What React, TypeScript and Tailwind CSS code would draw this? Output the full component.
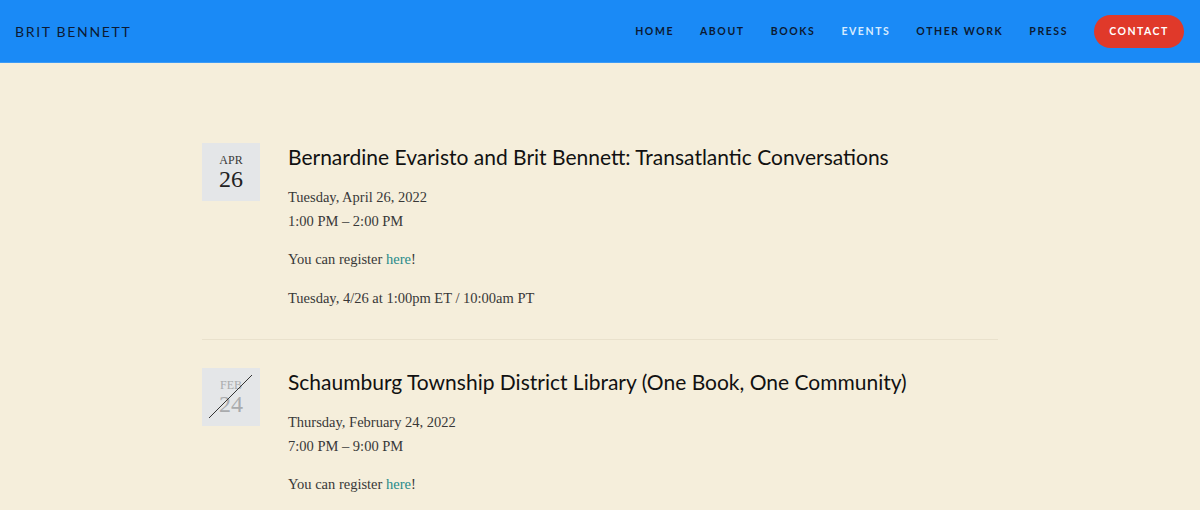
import React from 'react'

const NAV = ['Home', 'About', 'Books', 'Events', 'Other Work', 'Press']

type Event = {
  month: string
  day: string
  title: string
  date: string
  time: string
  past?: boolean
  extra?: string
}

const EVENTS: Event[] = [
  {
    month: 'Apr',
    day: '26',
    title: 'Bernardine Evaristo and Brit Bennett: Transatlantic Conversations',
    date: 'Tuesday, April 26, 2022',
    time: '1:00 PM – 2:00 PM',
    extra: 'Tuesday, 4/26 at 1:00pm ET / 10:00am PT',
  },
  {
    month: 'Feb',
    day: '24',
    title: 'Schaumburg Township District Library (One Book, One Community)',
    date: 'Thursday, February 24, 2022',
    time: '7:00 PM – 9:00 PM',
    past: true,
  },
]

const sans = "font-['Lato','Open_Sans',sans-serif]"
const serif = "font-['Liberation_Serif','DejaVu_Serif',serif]"

const DateBox = ({ ev }: { ev: Event }) => (
  <div className="relative flex h-[58px] w-[58px] shrink-0 flex-col items-center justify-center bg-[#e4e6e8] pt-[1px]">
    <div className={`${serif} text-[12px] uppercase leading-[13px] ${ev.past ? 'text-[#a9abad]' : 'text-[#3a3a3a]'}`}>
      {ev.month}
    </div>
    <div className={`${serif} text-[24px] leading-[25px] ${ev.past ? 'text-[#a9abad]' : 'text-[#222]'}`}>{ev.day}</div>
    {ev.past && (
      <svg className="absolute inset-0" width="58" height="58" viewBox="0 0 58 58">
        <line x1="7" y1="50" x2="50" y2="7" stroke="#333" strokeWidth="1" />
      </svg>
    )}
  </div>
)

const EventItem = ({ ev, last }: { ev: Event; last?: boolean }) => (
  <div className={`flex gap-[28px] ${last ? 'pt-[28px]' : 'border-b border-[#e9e1cc] pb-[29px]'}`}>
    <DateBox ev={ev} />
    <div className="flex-1">
      <h2 className={`${sans} text-[21px] font-normal leading-[28px] text-[#111]`}>{ev.title}</h2>
      <div className={`${serif} mt-[14px] text-[14.5px] leading-[24px] text-[#383838]`}>
        <div>{ev.date}</div>
        <div>{ev.time}</div>
        <p className="mt-[14px]">
          You can register <span className="text-[#1f8a8a]">here</span>!
        </p>
        {ev.extra && <p className="mt-[15px]">{ev.extra}</p>}
      </div>
    </div>
  </div>
)

export default function App() {
  return (
    <div className="min-h-[510px] w-full bg-[#f5eedb]">
      <header className="flex h-[63px] items-center justify-between border-b border-[#3d9bf6] bg-[#1a8af6] pl-[15px] pr-[16px] pt-[1px]">
        <div className={`${sans} text-[14px] font-normal tracking-[0.12em] text-[#0c1a33]`}>BRIT BENNETT</div>
        <nav className="flex items-center">
          {NAV.map((n) => (
            <a
              key={n}
              className={`${sans} mr-[26px] mt-[1px] text-[10.5px] font-bold uppercase tracking-[0.15em] ${n === 'Events' ? 'text-[#d6ebff]' : 'text-[#0c1a33]'}`}
            >
              {n}
            </a>
          ))}
          <a className={`${sans} flex h-[33px] w-[90px] items-center justify-center rounded-full bg-[#e0392a] text-[10.5px] font-bold uppercase tracking-[0.14em] text-white`}>
            Contact
          </a>
        </nav>
      </header>
      <main className="mx-auto w-[796px] pt-[80px]">
        {EVENTS.map((ev, i) => (
          <EventItem key={ev.title} ev={ev} last={i === EVENTS.length - 1} />
        ))}
      </main>
    </div>
  )
}
